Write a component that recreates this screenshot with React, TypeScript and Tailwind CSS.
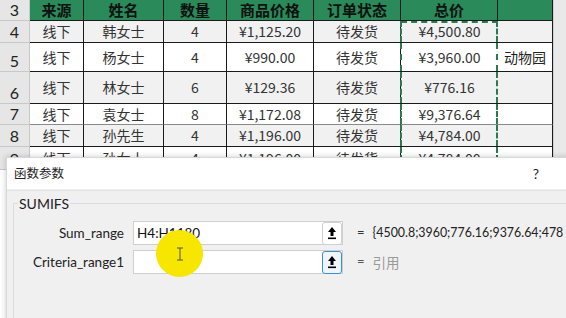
import React from 'react';

const cols = [
  { w: 54 },
  { w: 80 },
  { w: 63 },
  { w: 87 },
  { w: 87 },
  { w: 97 },
  { w: 55 },
];

const headers = ['来源', '姓名', '数量', '商品价格', '订单状态', '总价', ''];

const rows = [
  { h: 21, cells: ['线下', '韩女士', '4', '¥1,125.20', '待发货', '¥4,500.80', ''], num: 4 },
  { h: 28, cells: ['线下', '杨女士', '4', '¥990.00', '待发货', '¥3,960.00', '动物园'], num: 5 },
  { h: 31, cells: ['线下', '林女士', '6', '¥129.36', '待发货', '¥776.16', ''], num: 6 },
  { h: 20, cells: ['线下', '袁女士', '8', '¥1,172.08', '待发货', '¥9,376.64', ''], num: 7 },
  { h: 21, cells: ['线下', '孙先生', '4', '¥1,196.00', '待发货', '¥4,784.00', ''], num: 8 },
  { h: 22, cells: ['线下', '孙女士', '4', '¥1,196.00', '待发货', '¥4,784.00', ''], num: 9 },
];

const cjk = { fontFamily: '"Noto Sans CJK SC", sans-serif' };
const ui = { fontFamily: 'Lato, "Noto Sans CJK SC", sans-serif' };

const RefButton = ({ focused }: { focused?: boolean }) => (
  <div
    className={`w-[20px] h-[23px] flex items-center justify-center rounded-[3px] border ${
      focused ? 'border-[#3c8fd6] bg-[#eef5fc]' : 'border-[#d0d0d0] bg-white'
    }`}
  >
    <svg width="10" height="14" viewBox="0 0 10 14">
      <path d="M5 1 L9 6 L6.5 6 L6.5 10 L3.5 10 L3.5 6 L1 6 Z" fill="#000" />
      <rect x="1" y="11.5" width="8" height="1.6" fill="#000" />
    </svg>
  </div>
);

const App = () => {
  return (
    <div className="relative w-[566px] h-[318px] overflow-hidden bg-white" style={cjk}>
      {/* sheet */}
      <div className="flex">
        <div className="flex flex-col">
          {/* header row */}
          <div className="flex h-[21px]">
            <div className="w-[30px] bg-[#e6e6e6] border-r border-b border-[#c8c8c8] flex items-end justify-center text-[16px] leading-[20px] text-[#222]" style={ui}>
              3
            </div>
            {headers.map((h, i) => (
              <div
                key={i}
                style={{ width: cols[i].w }}
                className="bg-[#2a8a5a] border-r border-b border-[#1a1a1a] flex items-center justify-center text-[15px] font-bold text-[#111]"
              >
                {h}
              </div>
            ))}
          </div>
          {rows.map((r, ri) => (
            <div key={ri} className="flex" style={{ height: r.h + 1 }}>
              <div className="w-[30px] bg-[#e6e6e6] border-r border-b border-[#c8c8c8] flex items-end justify-center text-[16px] leading-[21px] text-[#222]" style={ui}>
                {r.num}
              </div>
              {r.cells.map((c, ci) => (
                <div
                  key={ci}
                  style={{ width: cols[ci].w }}
                  className={`relative flex items-center justify-center text-[14px] text-[#333] border-b ${
                    ri === 3 ? 'border-b-[#8a8a8a]' : 'border-b-[#1a1a1a]'
                  } ${ci === 5 ? '' : 'border-r border-r-[#1a1a1a]'} ${
                    ri % 2 === 0 ? 'bg-[#f1f1f1]' : 'bg-white'
                  }`}
                >
                  {ci === 5 && (
                    <>
                      <div className="absolute left-[-1px] top-0 bottom-0 border-l-2 border-dashed border-[#2a7a50]" />
                      <div className="absolute right-0 top-0 bottom-0 border-r-2 border-dashed border-[#2a7a50]" />
                      {ri === 0 && (
                        <div className="absolute left-0 right-0 top-0 border-t-2 border-dashed border-[#2a7a50]" />
                      )}
                    </>
                  )}
                  <span className={ci === 6 ? 'text-[14px] text-[#222]' : ''}>{c}</span>
                </div>
              ))}
            </div>
          ))}
        </div>
        <div className="flex-1 bg-[#e9e9e9] border-l border-[#d0d0d0]" />
      </div>

      {/* dialog */}
      <div className="absolute left-[6px] top-[157px] w-[580px] h-[180px] bg-[#f0f0f0] border border-[#d8d8d8] shadow-[0_0_6px_rgba(0,0,0,0.2)]" style={ui}>
        <div className="h-[31px] bg-white flex items-center justify-between pl-[7px] pr-[46px] text-[12.5px] text-[#222]" style={cjk}>
          <span>函数参数</span>
          <span className="text-[14px]" style={ui}>?</span>
        </div>
        <div className="h-[2px] border-b border-[#e4e4e4]" />
        <div className="relative ml-[6px] mt-[12px] h-[160px] border-l border-t border-[#dcdcdc]">
          <div className="absolute left-[4px] top-[-11px] px-[1px] bg-[#f0f0f0] text-[14px] text-[#222]">SUMIFS</div>
          <div className="flex flex-col gap-[5px] pt-[17px]">
            <div className="flex items-center">
              <div className="w-[110px] text-right text-[13.5px] text-[#222]">Sum_range</div>
              <div className="ml-[9px] flex items-center w-[210px] h-[24px] bg-white border border-[#cfcfcf]">
                <span className="flex-1 pl-[3px] text-[13.5px] text-[#111]">H4:H1180</span>
                <RefButton />
              </div>
              <span className="ml-[14px] text-[13px] text-[#333]">=</span>
              <span className="ml-[8px] text-[12.4px] text-[#222] whitespace-nowrap">{'{4500.8;3960;776.16;9376.64;478'}</span>
            </div>
            <div className="flex items-center">
              <div className="w-[110px] text-right text-[13.5px] text-[#222]">Criteria_range1</div>
              <div className="ml-[9px] flex items-center w-[210px] h-[24px] bg-white border border-[#cfcfcf]">
                <span className="flex-1" />
                <RefButton focused />
              </div>
              <span className="ml-[14px] text-[13px] text-[#555]">=</span>
              <span className="ml-[8px] text-[13.5px] text-[#999]" style={cjk}>引用</span>
            </div>
          </div>
        </div>
      </div>

      {/* cursor highlight */}
      <div className="absolute left-[156px] top-[230px] w-[47px] h-[47px] rounded-full bg-[#f7e600] flex items-center justify-center">
        <svg width="8" height="14" viewBox="0 0 8 14">
          <path d="M1 1 H7 M4 1 V13 M1 13 H7" stroke="#555" strokeWidth="1" fill="none" />
        </svg>
      </div>
    </div>
  );
};

export default App;
